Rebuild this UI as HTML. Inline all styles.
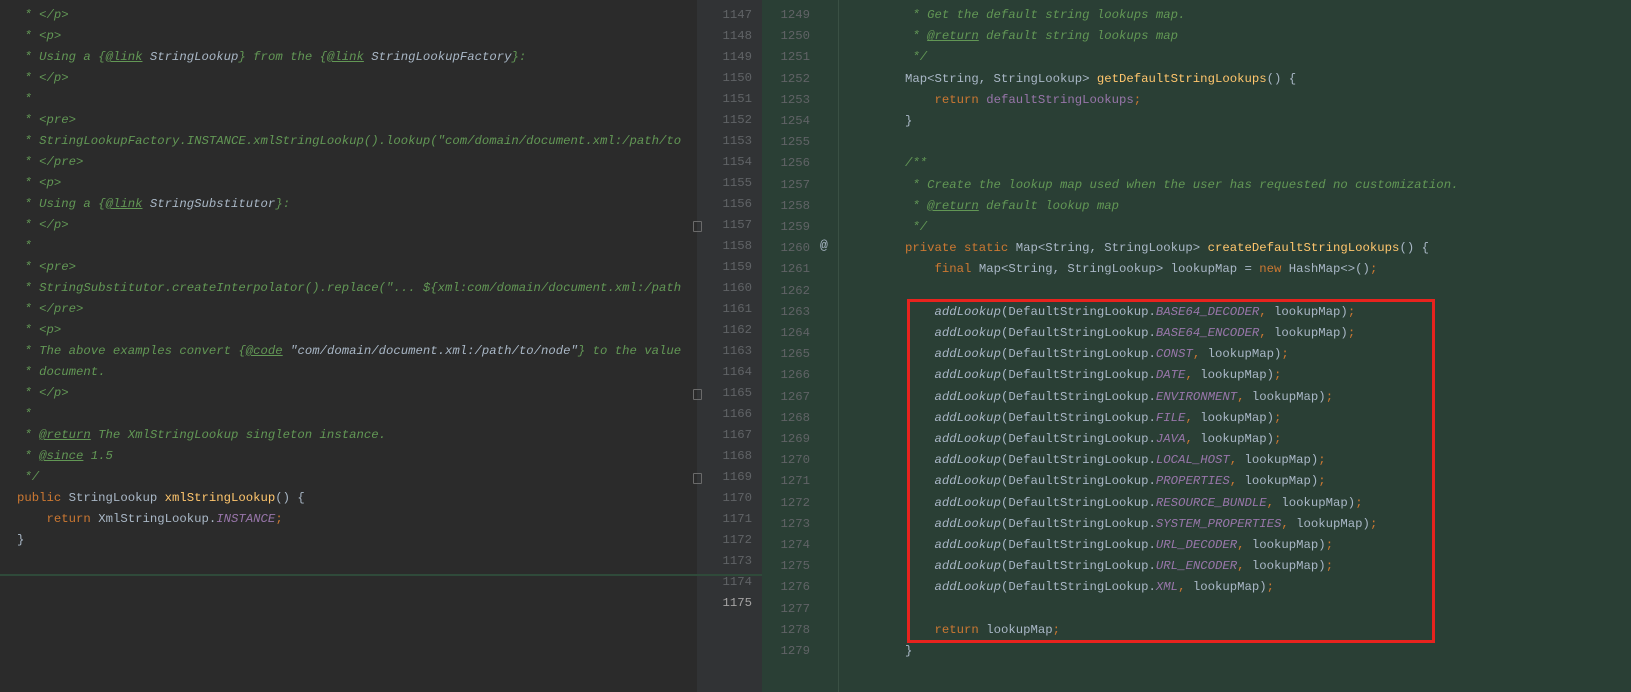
<!DOCTYPE html>
<html><head><style>
body{margin:0;width:1631px;height:692px;overflow:hidden;background:#2b2b2b;font-family:"Liberation Mono",monospace;font-size:12.3px;position:relative}
.p{position:absolute;top:0;height:692px}
.l{position:absolute;white-space:pre;color:#a9b7c6;line-height:21px}
.c{color:#629755;font-style:italic}
.w{color:#a9b7c6;font-style:italic}
.k{color:#cc7832}
.f{color:#ffc66d}
.s{color:#9876aa;font-style:italic}
.m{font-style:italic;color:#a9b7c6}
.n{position:absolute;color:#606366;text-align:right;width:40px;line-height:21px}
.fm{position:absolute;left:693px;width:7px;height:9px;border:1px solid #6a6a6a;border-radius:1px}
</style></head><body>
<div class="p" style="left:0;width:697px;background:#2b2b2b"></div>
<div class="p" style="left:697px;width:65px;background:#313335"></div>
<div class="p" style="left:762px;width:869px;background:#2a3f35"></div>
<div class="p" style="left:838px;width:1px;background:#3a5044"></div>
<div style="position:absolute;left:0;top:574px;width:762px;height:2px;background:#2f4a3a"></div>
<div style="position:absolute;left:907px;top:299px;width:522px;height:338px;border:3px solid #e8231e"></div>
<div class="fm" style="top:221px"></div>
<div class="fm" style="top:389px"></div>
<div class="fm" style="top:473px"></div>
<div class="l" style="left:17px;top:5px"><span class="c"> * &lt;/p&gt;
 * &lt;p&gt;
 * Using a {<u>@link</u> <span class="w">StringLookup</span>} from the {<u>@link</u> <span class="w">StringLookupFactory</span>}:
 * &lt;/p&gt;
 *
 * &lt;pre&gt;
 * StringLookupFactory.INSTANCE.xmlStringLookup().lookup("com/domain/document.xml:/path/to
 * &lt;/pre&gt;
 * &lt;p&gt;
 * Using a {<u>@link</u> <span class="w">StringSubstitutor</span>}:
 * &lt;/p&gt;
 *
 * &lt;pre&gt;
 * StringSubstitutor.createInterpolator().replace("... ${xml:com/domain/document.xml:/path
 * &lt;/pre&gt;
 * &lt;p&gt;
 * The above examples convert {<u>@code</u> <span class="w">"com/domain/document.xml:/path/to/node"</span>} to the value
 * document.
 * &lt;/p&gt;
 *
 * <u>@return</u> The XmlStringLookup singleton instance.
 * <u>@since</u> 1.5
 */</span>
<span class="k">public</span> StringLookup <span class="f">xmlStringLookup</span>() {
    <span class="k">return</span> XmlStringLookup.<span class="s">INSTANCE</span><span class="k">;</span>
}</div>
<div class="n" style="left:712px;top:5px">1147<br>1148<br>1149<br>1150<br>1151<br>1152<br>1153<br>1154<br>1155<br>1156<br>1157<br>1158<br>1159<br>1160<br>1161<br>1162<br>1163<br>1164<br>1165<br>1166<br>1167<br>1168<br>1169<br>1170<br>1171<br>1172<br>1173<br>1174<br><span style="color:#a4a3a3">1175</span></div>
<div class="n" style="left:770px;top:5px;line-height:21.2px">1249<br>1250<br>1251<br>1252<br>1253<br>1254<br>1255<br>1256<br>1257<br>1258<br>1259<br>1260<br>1261<br>1262<br>1263<br>1264<br>1265<br>1266<br>1267<br>1268<br>1269<br>1270<br>1271<br>1272<br>1273<br>1274<br>1275<br>1276<br>1277<br>1278<br>1279</div>
<div style="position:absolute;left:820px;top:238px;color:#a9b7c6;font-size:13px">@</div>
<div class="l" style="left:905px;top:5px;line-height:21.2px"><span class="c"> * Get the default string lookups map.
 * <u>@return</u> default string lookups map
 */</span>
Map&lt;String, StringLookup&gt; <span class="f">getDefaultStringLookups</span>() {
    <span class="k">return</span> <span style="color:#9876aa">defaultStringLookups</span><span class="k">;</span>
}

<span class="c">/**
 * Create the lookup map used when the user has requested no customization.
 * <u>@return</u> default lookup map
 */</span>
<span class="k">private static</span> Map&lt;String, StringLookup&gt; <span class="f">createDefaultStringLookups</span>() {
    <span class="k">final</span> Map&lt;String, StringLookup&gt; lookupMap = <span class="k">new</span> HashMap&lt;&gt;()<span class="k">;</span>

    <span class="m">addLookup</span>(DefaultStringLookup.<span class="s">BASE64_DECODER</span><span class="k">,</span> lookupMap)<span class="k">;</span>
    <span class="m">addLookup</span>(DefaultStringLookup.<span class="s">BASE64_ENCODER</span><span class="k">,</span> lookupMap)<span class="k">;</span>
    <span class="m">addLookup</span>(DefaultStringLookup.<span class="s">CONST</span><span class="k">,</span> lookupMap)<span class="k">;</span>
    <span class="m">addLookup</span>(DefaultStringLookup.<span class="s">DATE</span><span class="k">,</span> lookupMap)<span class="k">;</span>
    <span class="m">addLookup</span>(DefaultStringLookup.<span class="s">ENVIRONMENT</span><span class="k">,</span> lookupMap)<span class="k">;</span>
    <span class="m">addLookup</span>(DefaultStringLookup.<span class="s">FILE</span><span class="k">,</span> lookupMap)<span class="k">;</span>
    <span class="m">addLookup</span>(DefaultStringLookup.<span class="s">JAVA</span><span class="k">,</span> lookupMap)<span class="k">;</span>
    <span class="m">addLookup</span>(DefaultStringLookup.<span class="s">LOCAL_HOST</span><span class="k">,</span> lookupMap)<span class="k">;</span>
    <span class="m">addLookup</span>(DefaultStringLookup.<span class="s">PROPERTIES</span><span class="k">,</span> lookupMap)<span class="k">;</span>
    <span class="m">addLookup</span>(DefaultStringLookup.<span class="s">RESOURCE_BUNDLE</span><span class="k">,</span> lookupMap)<span class="k">;</span>
    <span class="m">addLookup</span>(DefaultStringLookup.<span class="s">SYSTEM_PROPERTIES</span><span class="k">,</span> lookupMap)<span class="k">;</span>
    <span class="m">addLookup</span>(DefaultStringLookup.<span class="s">URL_DECODER</span><span class="k">,</span> lookupMap)<span class="k">;</span>
    <span class="m">addLookup</span>(DefaultStringLookup.<span class="s">URL_ENCODER</span><span class="k">,</span> lookupMap)<span class="k">;</span>
    <span class="m">addLookup</span>(DefaultStringLookup.<span class="s">XML</span><span class="k">,</span> lookupMap)<span class="k">;</span>

    <span class="k">return</span> lookupMap<span class="k">;</span>
}</div>
</body></html>
